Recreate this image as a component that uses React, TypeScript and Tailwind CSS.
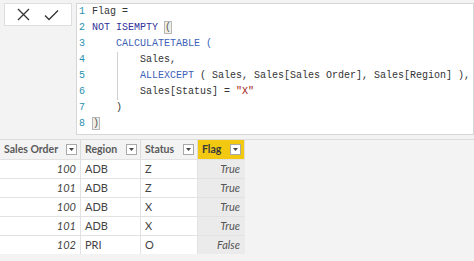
import { Fragment } from "react";

type Tok = { t: string; c?: string };

const KW = "text-[#31309a]";
const FN = "text-[#3b62b6]";
const STR = "text-[#a31515]";

const lines: { indent: number; toks: Tok[] }[] = [
  { indent: 0, toks: [{ t: "Flag =" }] },
  { indent: 0, toks: [{ t: "NOT ISEMPTY ", c: KW }, { t: "(", c: "bracket" }] },
  { indent: 4, toks: [{ t: "CALCULATETABLE (", c: FN }] },
  { indent: 8, toks: [{ t: "Sales," }] },
  {
    indent: 8,
    toks: [
      { t: "ALLEXCEPT", c: FN },
      { t: " ( Sales, Sales[Sales Order], Sales[Region] )," },
    ],
  },
  { indent: 8, toks: [{ t: "Sales[Status] = " }, { t: '"X"', c: STR }] },
  { indent: 4, toks: [{ t: ")" }] },
  { indent: 0, toks: [{ t: ")", c: "bracket" }] },
];

const rows = [
  { order: 100, region: "ADB", status: "Z", flag: "True" },
  { order: 101, region: "ADB", status: "Z", flag: "True" },
  { order: 100, region: "ADB", status: "X", flag: "True" },
  { order: 101, region: "ADB", status: "X", flag: "True" },
  { order: 102, region: "PRI", status: "O", flag: "False" },
];

const DropBox = () => (
  <span className="flex h-[11px] w-[11px] items-center justify-center border border-[#a9a9a9] bg-white">
    <svg width="5" height="3" viewBox="0 0 5 3">
      <path d="M0 0H5L2.5 3Z" fill="#444" />
    </svg>
  </span>
);

const HeadCell = ({ label, w, flag }: { label: string; w: string; flag?: boolean }) => (
  <div
    className={`${w} flex h-[19px] items-center justify-between border-r border-[#dcdcdc] pl-[4px] pr-[3px] text-[10.5px] font-bold ${
      flag ? "bg-[#f2c811] text-[#3b3b3b]" : "text-[#5a5a5a]"
    }`}
  >
    <span>{label}</span>
    <DropBox />
  </div>
);

export default function App() {
  return (
    <div className="flex h-[261px] w-[474px] flex-col overflow-hidden bg-[#f3f3f3] font-['Lato',sans-serif]">
      {/* formula bar */}
      <div className="flex h-[135px] pt-[3px]">
        <div className="ml-[4px] flex h-[23px] w-[68px] items-center justify-center gap-[14px] border border-[#dedede] bg-white">
          <svg width="13" height="13" viewBox="0 0 13 13">
            <path d="M1 1L12 12M12 1L1 12" stroke="#333" strokeWidth="1.3" fill="none" />
          </svg>
          <svg width="15" height="12" viewBox="0 0 15 12">
            <path d="M1 6.5L5 10.5L14 1.5" stroke="#333" strokeWidth="1.3" fill="none" />
          </svg>
        </div>
        <div className="ml-[4px] flex-1 border border-[#d6d6d6] bg-white font-['Liberation_Mono',monospace] text-[10px] leading-[16px]">
          {lines.map((ln, i) => (
            <div key={i} className="flex h-[16px] items-center">
              <span className="w-[15px] pl-[2px] text-[#2b91af]">{i + 1}</span>
              <span className="relative whitespace-pre text-[#333]">
                {" ".repeat(ln.indent)}
                {ln.toks.map((tk, j) =>
                  tk.c === "bracket" ? (
                    <span key={j} className="border border-[#b8b8b8] bg-[#eeeee6] text-[#555]">
                      {tk.t}
                    </span>
                  ) : (
                    <Fragment key={j}>
                      <span className={tk.c}>{tk.t}</span>
                    </Fragment>
                  )
                )}
                {i >= 3 && i <= 5 && (
                  <span className="absolute left-[25px] top-0 h-[16px] w-px bg-[#d0d0d0]" />
                )}
              </span>
            </div>
          ))}
        </div>
      </div>

      {/* table */}
      <div className="mt-[4px] flex flex-col text-[11px]">
        <div className="flex border-t border-[#dcdcdc]">
          <HeadCell label="Sales Order" w="w-[81px]" />
          <HeadCell label="Region" w="w-[60px]" />
          <HeadCell label="Status" w="w-[57px]" />
          <HeadCell label="Flag" w="w-[47px]" flag />
        </div>
        {rows.map((r, i) => (
          <div key={i} className="flex text-[#444]">
            <div className="flex h-[19px] w-[81px] items-center justify-end border-r border-t border-[#e2e2e2] bg-white pr-[4px] italic">
              {r.order}
            </div>
            <div className="flex h-[19px] w-[60px] items-center border-r border-t border-[#e2e2e2] bg-white pl-[4px]">
              {r.region}
            </div>
            <div className="flex h-[19px] w-[57px] items-center border-r border-t border-[#e2e2e2] bg-white pl-[4px]">
              {r.status}
            </div>
            <div className="flex h-[19px] w-[47px] items-center justify-end border-t border-[#e2e2e2] bg-[#ebebeb] pr-[5px] italic text-[#555]">
              {r.flag}
            </div>
          </div>
        ))}
      </div>
    </div>
  );
}
